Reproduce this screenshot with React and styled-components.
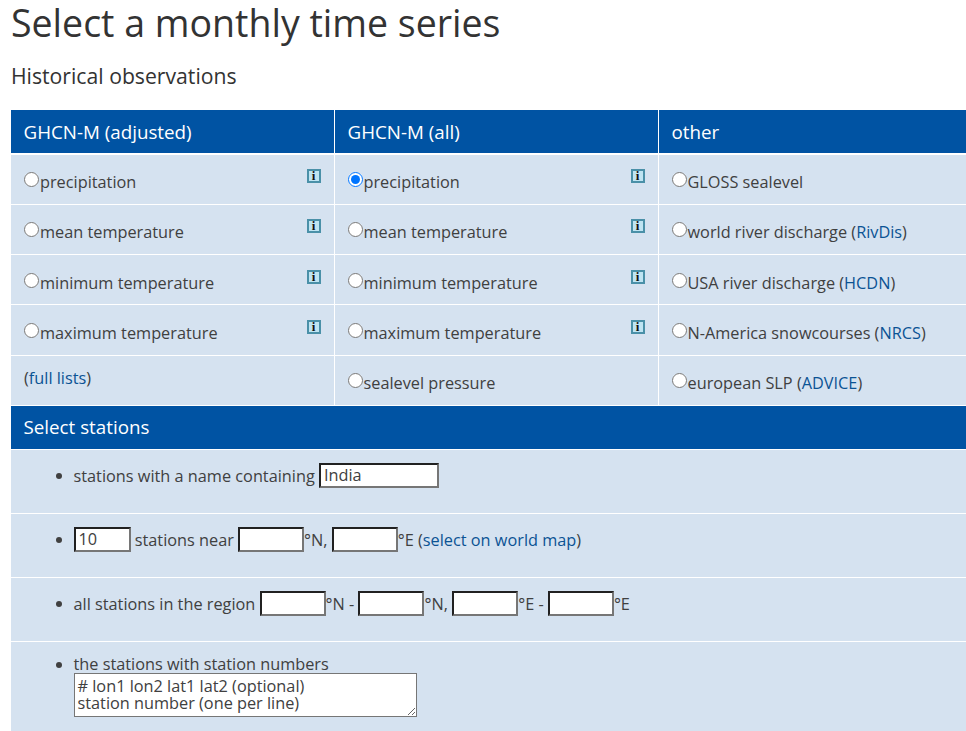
import React from "react";
import styled, { createGlobalStyle } from "styled-components";

const Global = createGlobalStyle`
  html, body { margin: 0; padding: 0; overflow: hidden; background: #fff; }
  body { font-family: "Open Sans", sans-serif; color: #404040; font-size: 16.3px; line-height: 20px; }
`;
const Page = styled.main`
  padding: 0 0 0 11px;
`;
const Title = styled.h1`
  margin: 0;
  font-size: 37.5px;
  line-height: 46px;
  font-weight: 400;
  color: #333;
`;
const Subtitle = styled.h2`
  margin: 8px 0 0;
  font-size: 21.2px;
  line-height: 44px;
  height: 56px;
  font-weight: 400;
  color: #333;
`;
const Table = styled.table`
  width: 955px;
  border-collapse: collapse;
  table-layout: fixed;
`;
const Head = styled.th`
  background: #0053a3;
  color: #fff;
  font-size: 18.77px;
  font-weight: 400;
  line-height: 24px;
  text-align: left;
  padding: 0 13px;
  height: 44px;
  box-sizing: border-box;
  border-left: 1px solid #fff;
  border-bottom: ${(p) => p.$rule || 2}px solid #fff;
  &:first-child { border-left: 0; padding-left: 12.5px; }
`;
const Cell = styled.td`
  background: #d5e2f0;
  padding: 0 13px;
  height: ${(p) => p.$h || 50}px;
  box-sizing: border-box;
  border-left: 1px solid #fff;
  border-bottom: 1px solid #fff;
  vertical-align: middle;
  &:first-child { border-left: 0; }
`;
const CellRow = styled.div`
  display: flex;
  justify-content: space-between;
  align-items: flex-start;
`;
const Choice = styled.label`
  display: flex;
  align-items: flex-start;
  line-height: 24px;
  padding-top: ${(p) => p.$top || 5}px;
`;
const Radio = styled.input.attrs({ type: "radio" })`
  width: 15px;
  height: 15px;
  margin: 2px 1px 0 0;
`;
const Link = styled.a`
  color: #0b5394;
  text-decoration: none;
`;
const PlainCell = styled.div`
  line-height: 24px;
  margin-top: -4px;
`;
const InfoBadge = styled.span`
  width: 10px;
  height: 10px;
  border: 2px solid #4a90a8;
  background: #bfe4f2;
  display: flex;
  align-items: center;
  justify-content: center;
  font: 700 13px/10px "Liberation Serif", serif;
  color: #111;
  margin-top: ${(p) => p.$top || 4}px;
`;
const StationCell = styled.td`
  background: #d5e2f0;
  padding: ${(p) => p.$pad || 13}px 13px 0;
  height: ${(p) => p.$h || 64}px;
  box-sizing: border-box;
  border-bottom: 1px solid #fff;
  vertical-align: top;
`;
const Bullets = styled.ul`
  margin: 0;
  padding: 0 0 0 49.5px;
`;
const Bullet = styled.li`
  line-height: 24px;
  &::marker { color: #404040; }
`;
const Field = styled.input`
  width: ${(p) => p.$w}px;
  height: 25px;
  box-sizing: border-box;
  border: 2px inset #767676;
  background: #fff;
  font: 16.3px/20px "Open Sans", sans-serif;
  color: #404040;
  padding: 0 3px;
  margin: 0;
  border-radius: 0;
`;
const Notes = styled.textarea`
  display: block;
  width: 343px;
  height: 44px;
  box-sizing: border-box;
  border: 1px solid #767676;
  background: #fff;
  font: 16.3px/17.5px "Open Sans", sans-serif;
  color: #404040;
  padding: 4px 3px 0;
  margin: -3px 0 0;
  border-radius: 0;
  overflow: hidden;
`;

const Info = ({ top }) => <InfoBadge $top={top}>i</InfoBadge>;
const Option = ({ checked, top, children }) => (
  <Choice $top={top}>
    <Radio name="series" defaultChecked={checked} />
    <span>{children}</span>
  </Choice>
);

const rows = [
  { a: "precipitation", checked: true, other: <>GLOSS sealevel</> },
  { a: "mean temperature", other: <>world river discharge (<Link href="#">RivDis</Link>)</> },
  { a: "minimum temperature", top: 7, info: 6, other: <>USA river discharge (<Link href="#">HCDN</Link>)</> },
  { a: "maximum temperature", h: 51, top: 6, info: 5, other: <>N-America snowcourses (<Link href="#">NRCS</Link>)</> },
];

export default function App() {
  return (
    <Page>
      <Global />
      <Title>Select a monthly time series</Title>
      <Subtitle>Historical observations</Subtitle>
      <Table>
        <colgroup>
          <col style={{ width: 323 }} />
          <col style={{ width: 324 }} />
          <col style={{ width: 308 }} />
        </colgroup>
        <thead>
          <tr>
            <Head>GHCN-M (adjusted)</Head>
            <Head>GHCN-M (all)</Head>
            <Head>other</Head>
          </tr>
        </thead>
        <tbody>
          {rows.map(({ a, checked, other, top, info, h }, i) => (
            <tr key={i}>
              <Cell $h={h}>
                <CellRow><Option top={top}>{a}</Option><Info top={info} /></CellRow>
              </Cell>
              <Cell $h={h}>
                <CellRow><Option top={top} checked={checked}>{a}</Option><Info top={info} /></CellRow>
              </Cell>
              <Cell $h={h}><Option top={top}>{other}</Option></Cell>
            </tr>
          ))}
          <tr>
            <Cell><PlainCell>(<Link href="#">full lists</Link>)</PlainCell></Cell>
            <Cell><Option>sealevel pressure</Option></Cell>
            <Cell><Option>european SLP (<Link href="#">ADVICE</Link>)</Option></Cell>
          </tr>
          <tr><Head colSpan={3} $rule={1}>Select stations</Head></tr>
          <tr>
            <StationCell colSpan={3}>
              <Bullets><Bullet>stations with a name containing <Field $w={120} defaultValue="India" /></Bullet></Bullets>
            </StationCell>
          </tr>
          <tr>
            <StationCell colSpan={3}>
              <Bullets><Bullet><Field $w={57} defaultValue="10" /> stations near <Field $w={66} />°N, <Field $w={66} />°E (<Link href="#">select on world map</Link>)</Bullet></Bullets>
            </StationCell>
          </tr>
          <tr>
            <StationCell colSpan={3}>
              <Bullets><Bullet>all stations in the region <Field $w={66} />°N - <Field $w={66} />°N, <Field $w={66} />°E - <Field $w={66} />°E</Bullet></Bullets>
            </StationCell>
          </tr>
          <tr>
            <StationCell colSpan={3} $h={90} $pad={10}>
              <Bullets>
                <Bullet>
                  the stations with station numbers
                  <Notes defaultValue={"# lon1 lon2 lat1 lat2 (optional)\nstation number (one per line)"} />
                </Bullet>
              </Bullets>
            </StationCell>
          </tr>
        </tbody>
      </Table>
    </Page>
  );
}
